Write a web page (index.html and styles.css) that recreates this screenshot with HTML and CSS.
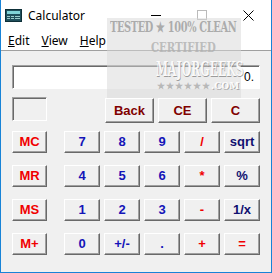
FILE: index.html
```html
<!DOCTYPE html>
<html lang="en">

<head>
    <meta charset="UTF-8">
    <title>Calculator</title>
    <link rel="stylesheet" href="styles.css">
</head>

<body>

    <div class="window">
        <div class="titlebar">
            <svg class="app-icon" width="17" height="13" viewBox="0 0 17 13">
                <rect x="0.5" y="0.5" width="16" height="12" fill="#1f4f5c" stroke="#0d2f38"/>
                <rect x="2" y="2" width="13" height="3" fill="#7fd3d8"/>
                <rect x="2" y="7" width="3" height="1" fill="#9cc"/>
                <rect x="6" y="7" width="3" height="1" fill="#9cc"/>
                <rect x="10" y="7" width="5" height="1" fill="#9cc"/>
                <rect x="2" y="9" width="3" height="1" fill="#9cc"/>
                <rect x="6" y="9" width="3" height="1" fill="#9cc"/>
                <rect x="10" y="9" width="5" height="1" fill="#9cc"/>
            </svg>
            <span class="title">Calculator</span>
            <div class="controls">
                <span class="ctl"><svg width="10" height="10" viewBox="0 0 10 10"><path d="M0 5.5h10" stroke="#000" stroke-width="1"/></svg></span>
                <span class="ctl"><svg width="10" height="10" viewBox="0 0 10 10"><rect x="0.5" y="0.5" width="9" height="9" fill="none" stroke="#bbb"/></svg></span>
                <span class="ctl"><svg width="11" height="11" viewBox="0 0 11 11"><path d="M0.5 0.5l10 10M10.5 0.5l-10 10" stroke="#000" stroke-width="1"/></svg></span>
            </div>
        </div>

        <div class="menubar">
            <span class="menu"><u>E</u>dit</span>
            <span class="menu"><u>V</u>iew</span>
            <span class="menu"><u>H</u>elp</span>
        </div>

        <div class="body">
            <div class="display">0.</div>

            <div class="top-row">
                <div class="mem-box"></div>
                <div class="clear-keys">
                    <button class="key dark">Back</button>
                    <button class="key dark">CE</button>
                    <button class="key dark">C</button>
                </div>
            </div>

            <div class="keypad">
                <div class="mem-col">
                    <button class="key red">MC</button>
                    <button class="key red">MR</button>
                    <button class="key red">MS</button>
                    <button class="key red">M+</button>
                </div>
                <div class="grid">
                    <button class="key blue">7</button>
                    <button class="key blue">8</button>
                    <button class="key blue">9</button>
                    <button class="key red">/</button>
                    <button class="key navy">sqrt</button>
                    <button class="key blue">4</button>
                    <button class="key blue">5</button>
                    <button class="key blue">6</button>
                    <button class="key red">*</button>
                    <button class="key navy">%</button>
                    <button class="key blue">1</button>
                    <button class="key blue">2</button>
                    <button class="key blue">3</button>
                    <button class="key red">-</button>
                    <button class="key navy">1/x</button>
                    <button class="key blue">0</button>
                    <button class="key blue">+/-</button>
                    <button class="key blue">.</button>
                    <button class="key red">+</button>
                    <button class="key red">=</button>
                </div>
            </div>
        </div>

        <div class="stamp">
            <div class="stamp-top">TESTED &#9733; 100% CLEAN</div>
            <div class="stamp-cert">CERTIFIED</div>
            <div class="stamp-brand">MAJORGEEKS</div>
            <div class="stamp-foot"><span class="stars">&#9733;&#9733;&#9733;&#9733;&#9733;&#9733;</span><span class="com">.COM</span></div>
        </div>
    </div>

</body>

</html>
```

FILE: styles.css
```css
html,
body {
    margin: 0;
    padding: 0;
}

body {
    width: 272px;
    height: 273px;
    overflow: hidden;
    font-family: "Noto Sans", "Liberation Sans", sans-serif;
}

.window {
    width: 272px;
    height: 273px;
    box-sizing: border-box;
    border: 1px solid #1883d7;
    border-top: none;
    background-color: #f0f0f0;
    position: relative;
    overflow: hidden;
}

.titlebar {
    height: 30px;
    background-color: white;
    display: flex;
    align-items: center;
}

.app-icon {
    margin-left: 4px;
    margin-right: 6px;
}

.title {
    font-size: 12px;
    color: #000;
}

.controls {
    margin-left: auto;
    display: flex;
    height: 30px;
}

.ctl {
    width: 46px;
    display: flex;
    align-items: center;
    justify-content: center;
}

.menubar {
    height: 20px;
    background-color: white;
    border-bottom: 1px solid #a0a0a0;
    display: flex;
    align-items: center;
    padding-left: 7px;
    font-size: 12px;
}

.menu {
    margin-right: 12px;
}

.body {
    padding: 14px 0 0 11px;
}

.display {
    width: 248px;
    height: 24px;
    box-sizing: border-box;
    background-color: white;
    border: 1px solid;
    border-color: #a0a0a0 #fff #fff #a0a0a0;
    box-shadow: inset 1px 1px 0 #696969;
    font-family: "Liberation Sans", Arial, sans-serif;
    font-size: 12px;
    text-align: right;
    line-height: 22px;
    padding-right: 5px;
}

.top-row {
    margin-top: 8px;
    display: flex;
    align-items: flex-start;
}

.mem-box {
    width: 35px;
    height: 24px;
    box-sizing: border-box;
    border: 1px solid;
    border-color: #a0a0a0 #fff #fff #a0a0a0;
    box-shadow: inset 1px 1px 0 #696969;
}

.clear-keys {
    margin-left: 58px;
    margin-top: 1px;
    display: flex;
    gap: 4px;
}

.clear-keys .key {
    width: 49px;
    height: 25px;
}

.key {
    width: 36px;
    height: 22px;
    box-sizing: border-box;
    margin: 0;
    padding: 0;
    background-color: #f0f0f0;
    border: 1px solid;
    border-color: #fff #696969 #696969 #fff;
    box-shadow: inset -1px -1px 0 #a0a0a0;
    font-family: "Liberation Sans", Arial, sans-serif;
    font-weight: bold;
    font-size: 13px;
    line-height: 18px;
}

.red {
    color: #f00000;
}

.blue {
    color: #1414b8;
}

.navy {
    color: #101070;
}

.dark {
    color: #800000;
}

.keypad {
    margin-top: 8px;
    display: flex;
}

.mem-col {
    display: flex;
    flex-direction: column;
    gap: 12px;
}

.mem-col .key {
    width: 35px;
}

.grid {
    margin-left: 17px;
    display: grid;
    grid-template-columns: repeat(5, 36px);
    column-gap: 4px;
    row-gap: 12px;
}

/* watermark stamp over the window */
.stamp {
    position: absolute;
    left: 106px;
    top: 18px;
    width: 134px;
    height: 80px;
    background-color: rgba(215, 215, 215, 0.5);
    font-family: "DejaVu Serif", "Liberation Serif", serif;
    font-weight: bold;
    color: rgba(160, 160, 160, 0.85);
    white-space: nowrap;
}

.stamp-top,
.stamp-cert,
.stamp-brand {
    width: max-content;
    transform-origin: left center;
}

.stamp-top {
    font-size: 14px;
    line-height: 17px;
    letter-spacing: -0.5px;
    margin: 1px 0 0 3px;
    transform: scaleX(0.7);
}

.stamp-cert {
    font-size: 13px;
    line-height: 14px;
    margin: 5px 0 0 44px;
    transform: scaleX(0.78);
    color: rgba(175, 175, 175, 0.8);
}

.stamp-brand {
    font-size: 21px;
    line-height: 25px;
    margin: 1px 0 0 49px;
    color: rgba(255, 255, 255, 0.95);
    text-shadow: 1px 1px 0 rgba(120, 120, 120, 0.7);
    transform: scaleX(0.52);
}

.stamp-foot {
    display: flex;
    justify-content: space-between;
    font-size: 9px;
    line-height: 11px;
    padding: 0 4px 0 50px;
}

.stars {
    letter-spacing: 1px;
    color: rgba(150, 150, 150, 0.6);
}

.com {
    color: rgba(255, 255, 255, 0.95);
    text-shadow: 1px 1px 0 rgba(130, 130, 130, 0.6);
}
```
